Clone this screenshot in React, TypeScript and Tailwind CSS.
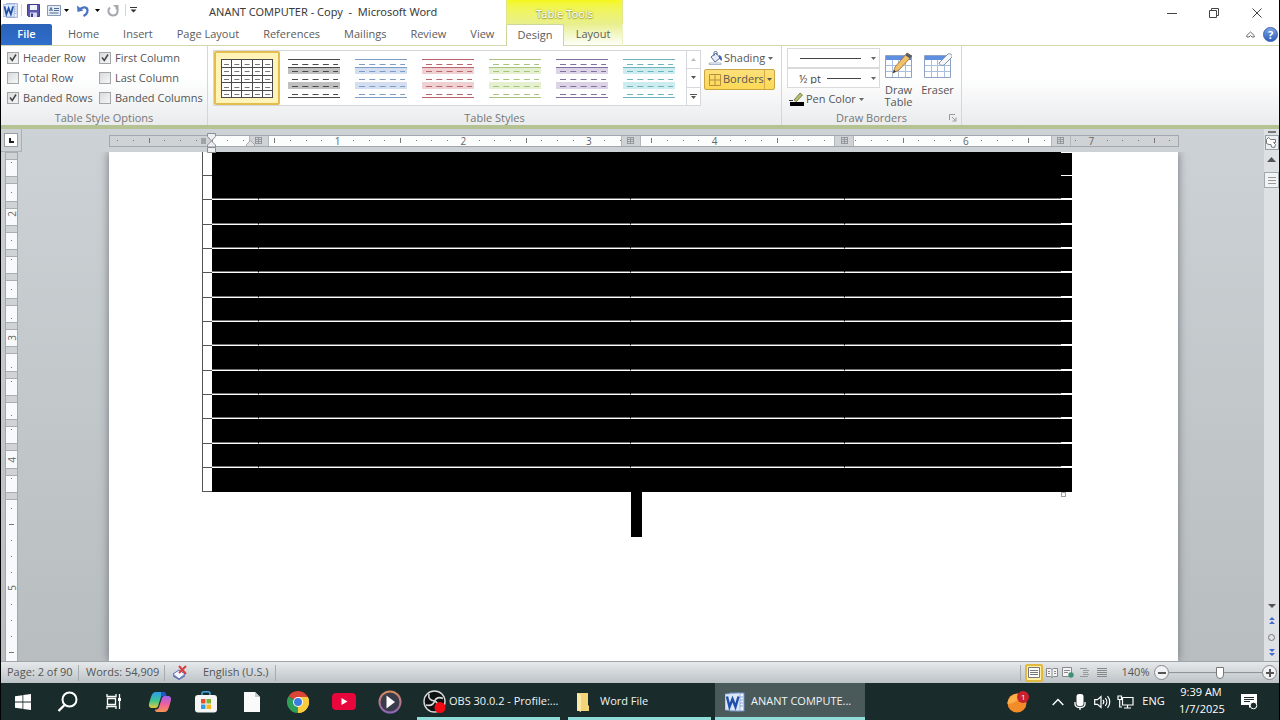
import type { ReactNode } from "react";

const TABS = ["Home", "Insert", "Page Layout", "References", "Mailings", "Review", "View"];

const STYLE_OPTIONS = [
  { label: "Header Row", checked: true },
  { label: "First Column", checked: true },
  { label: "Total Row", checked: false },
  { label: "Last Column", checked: false },
  { label: "Banded Rows", checked: true },
  { label: "Banded Columns", checked: false },
];

const TABLE_STYLES = [
  { name: "Light Shading", line: "#4a4a4a", band: "#c0c0c0" },
  { name: "Light Shading Accent 1", line: "#7d9cc4", band: "#d3dff0" },
  { name: "Light Shading Accent 2", line: "#b9676c", band: "#efd0d3" },
  { name: "Light Shading Accent 3", line: "#a9c47f", band: "#e4f0d0" },
  { name: "Light Shading Accent 4", line: "#80709c", band: "#dcd4e6" },
  { name: "Light Shading Accent 5", line: "#6fb3bb", band: "#cdecef" },
];

// One mark per table row on the vertical ruler
const ROW_MARKS = ["start", "center", "2", "center", "start", "center", "end", "3", "end", "start", "end", "start", "4", "start"];
const TAIL_MARKS = ["dot", "bar", "dot", "dot", "dot", "5", "dot", "dot", "dot", "bar"];

function Caret({ className = "" }: { className?: string }) {
  return (
    <svg className={`shrink-0 ${className}`} width="5" height="3" viewBox="0 0 5 3">
      <path d="M0 0h5L2.5 3z" fill="currentColor" />
    </svg>
  );
}

function WordIcon({ size }: { size: number }) {
  return (
    <svg className="shrink-0" width={size} height={size} viewBox="0 0 20 20">
      <rect x="5" y="1" width="14" height="18" fill="#eef4fc" stroke="#6f8fc4" />
      <path d="M15 5h3M15 8h3M15 11h3M15 14h3" stroke="#8aa6d6" />
      <path d="M0 2l15-1v18L0 18z" fill="#dbe7f8" stroke="#7d9bd0" strokeWidth=".7" />
      <path d="M2 4.500l2.500 10.500L7.500 7l3 8L13.500 4.500" fill="none" stroke="#1f4fa8" strokeWidth="2.400" />
    </svg>
  );
}

function QuickAccess() {
  return (
    <div className="flex w-[206px] shrink-0 items-center">
      <span className="flex w-[18px] items-center pt-px">
        <WordIcon size={15} />
      </span>
      <span className="h-3 w-px bg-gray-300" />
      <button aria-label="Save" className="ml-[5px]">
        <svg width="13" height="13" viewBox="0 0 13 13">
          <path d="M.5.500h12v12h-11l-1-1z" fill="#5b58b5" stroke="#403c92" />
          <path d="M3 1h7v5H3z" fill="#f2f2fb" />
          <path d="M3 8.500h7V13H3z" fill="#d7d8ee" />
          <path d="M4 9.500h2V13H4z" fill="#403c92" />
        </svg>
      </button>
      <button aria-label="Insert text box" className="ml-[7px] flex items-center gap-[3px]">
        <svg width="14" height="13" viewBox="0 0 14 13">
          <path d="M.5 1.500h13v10H.5z" fill="#e4ecf6" stroke="#8799b3" />
          <path d="M2.500 7L4 3.500 5.500 7M3 6h2M7 4.500h5M7 6.500h5M2.500 9h9" fill="none" stroke="#4f6a92" />
        </svg>
        <Caret />
      </button>
      <button aria-label="Undo" className="ml-2 flex items-center gap-[6px]">
        <svg width="12" height="13" viewBox="0 0 12 13">
          <path d="M2.500 5.500C6 2 10.500 3 10.500 6.500c0 3-2 4.500-4 5.500" fill="none" stroke="#4a74c4" strokeWidth="2.200" />
          <path d="M0 1.500l.5 6.500 6-1.500z" fill="#4a74c4" />
        </svg>
        <Caret />
      </button>
      <button aria-label="Redo" className="ml-[7px]">
        <svg width="12" height="13" viewBox="0 0 12 13">
          <path d="M3 3.500C0 6 1.500 11.500 6 11.500s6-5 3-8" fill="none" stroke="#a5a8ad" strokeWidth="2" />
          <path d="M6 1h5.500v5.500z" fill="#a5a8ad" />
        </svg>
      </button>
      <span className="ml-[6px] h-3 w-px bg-gray-300" />
      <button aria-label="Customize Quick Access Toolbar" className="ml-1">
        <svg width="7" height="6" viewBox="0 0 7 6">
          <path d="M0 .5h7" stroke="#333" />
          <path d="M.5 2.500h6l-3 3z" fill="#333" />
        </svg>
      </button>
    </div>
  );
}

function TitleBar() {
  return (
    <header className="flex h-6 shrink-0">
      <div className="flex w-[505px] shrink-0 pb-1 pl-[2px]">
        <QuickAccess />
        <h1 className="self-center pt-1 font-['Noto_Sans',sans-serif] text-[11px] whitespace-pre text-[#3b3b3b]">
          ANANT COMPUTER - Copy  -  Microsoft Word
        </h1>
      </div>
      <div className="flex w-[117px] shrink-0 items-center justify-center border-x border-[#dfe68a] bg-linear-to-b from-[#f6f814] to-[#e8ef8c] pt-1 font-['Noto_Sans',sans-serif] text-[11px] text-white [text-shadow:0_0_2px_#8c9420,0_1px_1px_#a5a940]">
        Table Tools
      </div>
      <div className="flex flex-1 justify-end pr-px text-[#444]">
        <button aria-label="Minimize" className="flex w-[43px] items-center justify-center pt-[2px]">
          <svg width="10" height="10" viewBox="0 0 10 10"><path d="M0 5.500h10" stroke="currentColor" /></svg>
        </button>
        <button aria-label="Restore" className="flex w-[42px] items-center justify-center pt-[2px]">
          <svg width="10" height="10" viewBox="0 0 10 10">
            <path d="M.5 2.500h7v7h-7zM2.500 2.500v-2h7v7h-2" fill="none" stroke="currentColor" />
          </svg>
        </button>
        <button aria-label="Close" className="flex w-[43px] items-center justify-center pt-[2px]">
          <svg width="10" height="10" viewBox="0 0 10 10"><path d="M.5.500l9 9M9.500.500l-9 9" stroke="currentColor" /></svg>
        </button>
      </div>
    </header>
  );
}

function TabRow() {
  return (
    <nav className="flex h-[22px] shrink-0 text-[11px] text-[#5c5c5c]">
      <div className="flex w-[505px] shrink-0 border-b border-[#d3d9ae]">
        <button className="mr-1 w-[51px] shrink-0 rounded-t-xs bg-linear-to-b from-[#2a62b8] to-[#2f6fcd] font-semibold text-white">
          File
        </button>
        {TABS.map((tab) => (
          <button key={tab} className="px-3 whitespace-nowrap">{tab}</button>
        ))}
      </div>
      <div className="flex w-[117px] shrink-0 border-r border-[#eef1c4] bg-linear-to-b from-[#e8ef8c] to-white">
        <button className="w-[58px] rounded-t-xs border border-b-0 border-[#cdd49c] bg-white">Design</button>
        <button className="flex-1 border-b border-[#d3d9ae]">Layout</button>
      </div>
      <div className="flex flex-1 items-center justify-end gap-2 border-b border-[#d3d9ae] pr-px">
        <button aria-label="Minimize the Ribbon">
          <svg width="9" height="7" viewBox="0 0 9 7">
            <path d="M.8 4.500L4.500 1l3.700 3.500v1.500H6L4.500 4.500 3 6H.8z" fill="none" stroke="#666" />
          </svg>
        </button>
        <button aria-label="Help" className="flex size-[15px] items-center justify-center rounded-full border border-[#355fae] bg-linear-to-b from-[#7fa4e0] to-[#2f62bd] text-[11px] leading-none font-bold text-white">
          ?
        </button>
      </div>
    </nav>
  );
}

function Group({ label, className = "", launcher, children }: { label?: string; className?: string; launcher?: boolean; children: ReactNode }) {
  return (
    <section className={`flex flex-col border-r border-[#d6dbc0] ${className}`}>
      <div className="flex-1">{children}</div>
      <div className="flex h-[14px] items-center text-[11px] text-[#777]">
        <span className="flex-1 text-center">{label}</span>
        {launcher && (
          <button aria-label={`${label} dialog`} className="mr-1 -ml-3">
            <svg width="8" height="8" viewBox="0 0 8 8">
              <path d="M.5 6V.500H6M3 3l3.500 3.500M7 3.500V7H3.500" fill="none" stroke="#999" />
            </svg>
          </button>
        )}
      </div>
    </section>
  );
}

function Option({ label, checked }: { label: string; checked: boolean }) {
  return (
    <label className="flex items-center gap-1 whitespace-nowrap">
      <span className="relative flex size-3 shrink-0">
        <input
          type="checkbox"
          defaultChecked={checked}
          className="peer size-3 appearance-none border border-[#a3a6a9] bg-linear-to-br from-[#d9dbdd] to-[#f6f6f6]"
        />
        <svg className="pointer-events-none absolute inset-0 hidden peer-checked:block" width="12" height="12" viewBox="0 0 12 12">
          <path d="M3 5.500l2.300 3L9 2.500" fill="none" stroke="#444" strokeWidth="1.500" />
        </svg>
      </span>
      {label}
    </label>
  );
}

function GridThumb() {
  return (
    <svg width="52" height="39" viewBox="0 0 52 39">
      <path
        d="M0 .5h52M0 8.500h52M0 16.500h52M0 23.500h52M0 31.500h52M0 38.500h52M.5 0v39M10.500 0v39M20.500 0v39M31.500 0v39M41.500 0v39M51.500 0v39"
        stroke="#4a4a4a"
      />
      <path
        d="M3 5.500h47M3 12.500h47M3 20.500h47M3 28.500h47M3 35.500h47"
        stroke="#777"
        strokeDasharray="5 5.300"
      />
    </svg>
  );
}

function BandedThumb({ line, band }: { line: string; band: string }) {
  return (
    <svg width="52" height="39" viewBox="0 0 52 39">
      <path d="M0 8h52v7H0zM0 23h52v7H0z" fill={band} />
      <path d="M0 .5h52M0 8.500h52M0 38.500h52" stroke={line} />
      <path d="M4 5.500h46M4 12.500h46M4 20.500h46M4 27.500h46M4 35.500h46" stroke={line} strokeDasharray="6 4.300" />
    </svg>
  );
}

function TableIcon({ children }: { children: ReactNode }) {
  return (
    <svg width="28" height="28" viewBox="0 0 28 28">
      <path d="M.5 3.500h26v22H.5z" fill="#fff" stroke="#8ea3c4" />
      <path d="M1 4h25v4H1z" fill="#5f8fe0" />
      <path d="M1 13.500h25M1 19.500h25M7.500 8v17M13.500 8v17M20.500 8v17" stroke="#a9bfdf" />
      {children}
    </svg>
  );
}

function LineSelect({ label, value }: { label: string; value?: string }) {
  return (
    <label className="relative flex h-5 w-[93px] items-center text-[#444]">
      <select aria-label={label} className="h-full w-full appearance-none border border-[#d9dadb] bg-white pl-[11px] text-[11px] leading-none">
        <option>{value ?? ""}</option>
      </select>
      <span className={`pointer-events-none absolute right-[19px] h-px bg-[#444] ${value ? "w-[34px]" : "w-[61px]"}`} />
      <Caret className="pointer-events-none absolute right-1 text-[#666]" />
    </label>
  );
}

function Ribbon() {
  return (
    <div className="flex h-[79px] shrink-0 bg-linear-to-b from-white from-40% to-[#e9ebed] text-[11px] text-[#555]">
      <Group label="Table Style Options" className="w-[207px]">
        <div className="grid grid-cols-[92px_1fr] gap-y-1 pt-1 pl-[6px] leading-4">
          {STYLE_OPTIONS.map((o) => <Option key={o.label} {...o} />)}
        </div>
      </Group>

      <Group label="Table Styles" className="w-[574px]">
        <div className="flex pt-1 pl-[5px]">
          <div className="flex h-[56px] border border-[#d5d7da] bg-white">
            <button aria-label="Table Grid" className="flex w-[66px] items-center justify-center rounded-xs border-2 border-[#e3bd50] bg-[#fff3b8]">
              <span className="bg-white"><GridThumb /></span>
            </button>
            {TABLE_STYLES.map((s) => (
              <button key={s.name} aria-label={s.name} className="flex w-[67px] items-center justify-center">
                <BandedThumb line={s.line} band={s.band} />
              </button>
            ))}
            <div className="ml-1 flex w-[14px] flex-col divide-y divide-[#d5d7da] border-l border-[#d5d7da] text-[#555]">
              <button aria-label="Previous styles" className="flex flex-1 items-center justify-center text-[#bbb]">
                <Caret className="rotate-180" />
              </button>
              <button aria-label="Next styles" className="flex flex-1 items-center justify-center"><Caret /></button>
              <button aria-label="More styles" className="flex flex-1 flex-col items-center justify-center gap-px">
                <span className="h-px w-[7px] bg-[#555]" />
                <Caret />
              </button>
            </div>
          </div>
          <div className="ml-[3px] flex flex-col">
            <button className="flex h-4 items-center gap-px pl-1">
              <svg width="15" height="14" viewBox="0 0 15 14">
                <path d="M3 6l5-4 4 5-5 4z" fill="#e8eefa" stroke="#55699a" />
                <path d="M6 5V1.500c0-1.500 3-1.500 3 0V4" fill="none" stroke="#55699a" />
                <path d="M11 4c3 1 3.500 4 2.500 6-1-1-2-2-2.500-3z" fill="#3f67b5" />
                <path d="M1 12h12v1.500H1z" fill="#fff" stroke="#9aa7c0" strokeWidth=".8" />
              </svg>
              Shading
              <Caret className="ml-[2px] text-[#666]" />
            </button>
            <div className="mt-[3px] flex h-[21px] rounded-xs border border-[#c9a544] bg-linear-to-b from-[#fbe07a] to-[#fdd954]">
              <button className="flex items-center gap-[2px] pl-1">
                <svg width="12" height="12" viewBox="0 0 12 12">
                  <path d="M.5.500h11v11H.5zM6 0v12M0 6h12" fill="none" stroke="#b8903a" />
                </svg>
                Borders
              </button>
              <button aria-label="Borders menu" className="flex w-[10px] items-center justify-center border-l border-[#d1ab45]">
                <Caret />
              </button>
            </div>
          </div>
        </div>
      </Group>

      <Group label="Draw Borders" launcher className="w-[180px]">
        <div className="flex pt-[2px] pl-[5px]">
          <div className="flex flex-col">
            <LineSelect label="Line Style" />
            <LineSelect label="Line Weight" value="½ pt" />
            <button className="flex h-[22px] items-center gap-[2px] pl-[2px]">
              <svg width="15" height="14" viewBox="0 0 15 14">
                <path d="M5 8l6-7 2.500 2L7.500 9.500z" fill="#b8bf6a" stroke="#66703a" strokeWidth=".8" />
                <path d="M0 8.500h4" stroke="#333" />
                <path d="M1 10h14v4H1z" fill="#000" />
              </svg>
              Pen Color
              <Caret className="ml-px text-[#666]" />
            </button>
          </div>
          <button className="ml-[3px] flex w-[31px] flex-col items-center gap-1 pt-1 leading-3">
            <TableIcon>
              <path d="M8 21l2-6L22 1l5 3-13 14z" fill="#f1c069" stroke="#8a6a30" strokeWidth=".8" />
              <path d="M22 1l5 3-2 2.500-4.500-3z" fill="#555e70" />
              <path d="M8 21l1-3 2 1.500z" fill="#333" />
            </TableIcon>
            Draw Table
          </button>
          <button className="ml-2 flex w-[31px] flex-col items-center gap-1 pt-1 leading-3">
            <TableIcon>
              <path d="M15 11L24 2c2-1 5 1 4 3l-8 8c-2 1-5 0-5-2z" fill="#f4f6fa" stroke="#8290a8" />
            </TableIcon>
            Eraser
          </button>
        </div>
      </Group>
    </div>
  );
}

function ColumnMarker({ className }: { className: string }) {
  return (
    <span className={`absolute inset-y-0 flex w-5 items-center justify-center border-x border-[#b3b8bc] bg-[#cfd3d6] ${className}`}>
      <svg width="7" height="7" viewBox="0 0 7 7">
        <path d="M0 .5h7M0 2.500h7M0 4.500h7M0 6.500h7M.5 0v7M3.500 0v7M6.500 0v7" stroke="#8a8f94" strokeWidth=".8" />
      </svg>
    </span>
  );
}

function HorizontalRuler() {
  return (
    <div className="relative mr-[85px] ml-[87px] flex h-3 flex-1 border border-[#a3a8ae] bg-linear-to-r from-[#cfd3d6] from-[9.5%] via-[#fbfcfc] via-[9.5%] to-[#fbfcfc] text-[10px] text-[#666]">
      {Array.from({ length: 68 }, (_, i) => {
        const eighth = i - 6;
        const isInch = eighth > 0 && eighth % 8 === 0;
        return (
          <span key={i} className={`flex w-0 flex-1 items-center justify-center leading-none ${i > 59 ? "bg-[#cfd3d6]" : ""}`}>
            {isInch ? eighth / 8 : <i className={`w-px bg-[#777] ${eighth % 4 === 0 ? "h-[5px]" : "h-px"}`} />}
          </span>
        );
      })}
      <span className="absolute inset-y-[2px] left-[8.5%] w-[5px] bg-[#9fa3a8]" />
      <ColumnMarker className="left-[13%]" />
      <ColumnMarker className="left-[47.8%]" />
      <ColumnMarker className="left-[67.8%]" />
      <ColumnMarker className="left-[88.1%]" />
      <svg className="absolute -top-[3px] left-[9.1%]" width="9" height="20" viewBox="0 0 9 20">
        <path d="M.5.500h8v3L4.500 8 .5 3.500zM4.500 8l4 4v2h-8v-2zM.5 14.500h8v5h-8z" fill="#eceef0" stroke="#8a8f94" />
      </svg>
      <svg className="absolute top-1 left-[12.7%]" width="9" height="7" viewBox="0 0 9 7">
        <path d="M4.500.500l4 4v2h-8v-2z" fill="#dfe1e3" stroke="#a5a9ad" />
      </svg>
    </div>
  );
}

function VerticalRuler() {
  return (
    <div className="flex w-[13px] flex-col overflow-hidden border-x border-[#a3a8ae] bg-[#f7f9fa] text-[10px] text-[#666]">
      <div className="flex h-[340px] shrink-0 flex-col">
        {ROW_MARKS.map((mark, i) => (
          <div key={i} className="flex min-h-0 flex-1 flex-col items-center">
            <span className="h-2 w-full shrink-0 border-y border-[#a9aeb3] bg-[#cfd3d6]" />
            <span className={`flex min-h-0 flex-1 ${mark === "start" ? "items-start pt-[2px]" : mark === "end" ? "items-end pb-[3px]" : mark === "2" ? "items-start" : "items-center"}`}>
              {/\d/.test(mark) ? <b className="-rotate-90 leading-none font-normal">{mark}</b> : <i className="size-px bg-[#777]" />}
            </span>
          </div>
        ))}
      </div>
      <span className="h-2 shrink-0 border-y border-[#a9aeb3] bg-[#cfd3d6]" />
      {TAIL_MARKS.map((mark, i) => (
        <span key={i} className="flex h-4 shrink-0 items-center justify-center">
          {mark === "5" ? (
            <b className="-rotate-90 leading-none font-normal">5</b>
          ) : (
            <i className={`h-px bg-[#777] ${mark === "bar" ? "w-[5px]" : "w-px"}`} />
          )}
        </span>
      ))}
    </div>
  );
}

function SelectedTable() {
  return (
    <table className="w-full table-fixed border-separate border-spacing-0 border-l border-[#555] bg-white">
      <colgroup>
        <col className="w-[9px]" />
        <col className="w-[5.4%]" />
        <col className="w-[42.8%]" />
        <col className="w-[24.7%]" />
        <col />
        <col className="w-[11px]" />
      </colgroup>
      <tbody>
        {Array.from({ length: 14 }, (_, row) => {
          const line = row === 0 || row === 13 ? "border-b-black" : "border-b-white shadow-[inset_0_-1px_#707070]";
          return (
            <tr key={row} className={row % 3 === 2 && row < 12 ? "h-[25px]" : "h-6"}>
              <td className="border-b border-[#555] p-0" />
              <td className={`border-r border-b border-r-black bg-black p-0 ${line}`} />
              <td className={`border-r border-b border-r-black bg-black p-0 ${line}`} />
              <td className={`border-r border-b border-r-black bg-black p-0 ${line}`} />
              <td className={`border-b bg-black p-0 ${line}`} />
              <td className={`bg-black p-0 ${row === 13 ? "" : row === 0 ? "border-y border-white" : "border-b-2 border-white"}`} />
            </tr>
          );
        })}
      </tbody>
    </table>
  );
}

function ScrollBar() {
  return (
    <div className="flex w-[15px] shrink-0 flex-col items-center bg-[#dde1e4] text-[#555]">
      <span className="mt-[2px] h-[2px] w-2 bg-[#777]" />
      <button aria-label="View Ruler" className="mt-[2px] flex h-[15px] w-[14px] items-center justify-center border border-[#999fa5] bg-[#eceff1]">
        <svg width="11" height="11" viewBox="0 0 11 11">
          <path d="M.5 2.500l2-2 2 2h5v3h-2l2 2-1 3-3-.5-.5-2.500H3l-2.500-1z" fill="#fff" stroke="#777" />
        </svg>
      </button>
      <button aria-label="Scroll up" className="flex h-[22px] items-center pb-1">
        <svg width="9" height="5" viewBox="0 0 9 5"><path d="M0 5l4.500-5L9 5z" fill="currentColor" /></svg>
      </button>
      <div className="w-full flex-1">
        <div className="flex h-4 flex-col items-center justify-center gap-[2px] border border-[#a3a8ae] bg-[#f1f3f4]">
          <span className="h-px w-2 bg-[#999]" />
          <span className="h-px w-2 bg-[#999]" />
          <span className="h-px w-2 bg-[#999]" />
        </div>
      </div>
      <button aria-label="Scroll down" className="flex h-[15px] items-center">
        <svg width="8" height="4" viewBox="0 0 8 4"><path d="M0 0h8L4 4z" fill="currentColor" /></svg>
      </button>
      <button aria-label="Previous Page" className="flex h-4 items-center">
        <svg width="6" height="8" viewBox="0 0 6 8"><path d="M0 3l3-3 3 3zM0 7l3-3 3 3z" fill="#4468d0" /></svg>
      </button>
      <button aria-label="Select Browse Object" className="flex h-4 items-center">
        <span className="size-[7px] rounded-full border border-[#777]" />
      </button>
      <button aria-label="Next Page" className="flex h-4 items-center">
        <svg width="6" height="8" viewBox="0 0 6 8"><path d="M0 0h6L3 3zM0 4h6L3 7z" fill="#4468d0" /></svg>
      </button>
    </div>
  );
}

function Workspace() {
  return (
    <main className="flex min-h-0 flex-1 border-t-4 border-[#b4c294] bg-linear-to-b from-[#cdd2d6] to-[#b8bdc0]">
      <div className="flex min-w-0 flex-1 flex-col">
        <div className="flex h-[23px] shrink-0 items-center">
          <div className="flex h-full w-[21px] shrink-0 items-center justify-center border-r border-b border-[#abb0b5]">
            <button aria-label="Tab selector" className="flex size-[14px] items-center justify-center border border-[#9a9fa5] bg-white">
              <svg width="5" height="5" viewBox="0 0 5 5"><path d="M1 0v4h4" fill="none" stroke="#222" strokeWidth="2" /></svg>
            </button>
          </div>
          <HorizontalRuler />
        </div>
        <div className="flex min-h-0 flex-1">
          <div className="flex w-[21px] shrink-0 pl-1">
            <VerticalRuler />
          </div>
          <div className="flex min-w-0 flex-1 overflow-hidden pr-[86px] pl-[87px]">
            <article className="min-w-0 flex-1 bg-white pr-[106px] pl-[93px] shadow-[0_0_9px_#6f757a]">
              <SelectedTable />
              <div className="flex justify-between">
                <span className="w-[10px]" />
                <span className="h-[45px] w-[11px] bg-black" />
                <span className="mr-[6px] size-[5px] border border-gray-400" />
              </div>
            </article>
          </div>
        </div>
      </div>
      <ScrollBar />
    </main>
  );
}

function StatusBar() {
  return (
    <footer className="flex h-[22px] shrink-0 items-center border-t border-[#9fa4a8] bg-linear-to-b from-[#e6e9eb] to-[#bcc3c7] text-[11px] text-[#555]">
      <button className="w-[77px] pl-[6px] text-left whitespace-nowrap">Page: 2 of 90</button>
      <span className="h-4 w-px bg-[#a6abaf]" />
      <button className="w-[85px] pl-[7px] text-left whitespace-nowrap">Words: 54,909</button>
      <span className="h-4 w-px bg-[#a6abaf]" />
      <button aria-label="Proofing errors" className="ml-[7px]">
        <svg width="16" height="15" viewBox="0 0 16 15">
          <path d="M1 9l6-4 6 4-6 5z" fill="#f4f6ff" stroke="#5b6bb8" />
          <path d="M1 10l6 4 6-4v1.500L7 15l-6-3.500z" fill="#5b6bb8" />
          <path d="M7 1l7 8M14 1L7 8" stroke="#d84040" strokeWidth="2" />
        </svg>
      </button>
      <button className="ml-[15px] whitespace-nowrap">English (U.S.)</button>
      <span className="ml-[6px] h-4 w-px bg-[#a6abaf]" />
      <div className="flex flex-1 items-center justify-end pr-[2px]">
        <span className="mr-1 h-4 w-px bg-[#a6abaf]" />
        <button aria-label="Print Layout" className="flex size-[18px] items-center justify-center rounded-xs border-2 border-[#e2b93f] bg-[#fff0a8]">
          <svg width="12" height="11" viewBox="0 0 12 11">
            <path d="M.5.500h11v10H.5z" fill="#fff" stroke="#777" />
            <path d="M2 3.500h8M2 5.500h8M2 7.500h8" stroke="#777" />
          </svg>
        </button>
        <button aria-label="Full Screen Reading" className="ml-[3px]">
          <svg width="12" height="11" viewBox="0 0 12 11">
            <path d="M.5 1.500h4L6 2.500l1.500-1h4v8h-4L6 10.500 4.500 9.500h-4zM6 2.500v8" fill="#f3f4f5" stroke="#888" />
            <path d="M2 4.500h2M2 6.500h2M8 4.500h2M8 6.500h2" stroke="#888" />
          </svg>
        </button>
        <button aria-label="Web Layout" className="ml-1">
          <svg width="12" height="11" viewBox="0 0 12 11">
            <path d="M.5.500h9v9h-9z" fill="#f3f4f5" stroke="#888" />
            <path d="M2 3.500h6M2 5.500h4" stroke="#888" />
            <circle cx="9" cy="8" r="2.700" fill="#3f8f72" />
          </svg>
        </button>
        <button aria-label="Outline" className="ml-[6px]">
          <svg width="9" height="9" viewBox="0 0 9 9"><path d="M0 .5h7M3 2.500h6M3 4.500h5M3 6.500h6M0 8.500h8" stroke="#999" /></svg>
        </button>
        <button aria-label="Draft" className="ml-2">
          <svg width="10" height="9" viewBox="0 0 10 9"><path d="M0 .5h10M0 2.500h10M0 4.500h10M0 6.500h10M0 8.500h10" stroke="#888" /></svg>
        </button>
        <button className="ml-[10px] w-[37px]">140%</button>
        <button aria-label="Zoom Out" className="flex size-[15px] items-center justify-center rounded-full border border-[#888] bg-[#f0f2f3]">
          <span className="h-[2px] w-2 bg-[#555]" />
        </button>
        <input
          type="range"
          aria-label="Zoom"
          defaultValue={55}
          className="h-3 w-[93px] appearance-none bg-linear-to-b from-transparent from-45% via-[#8a8f94] via-45% to-transparent to-55% [&::-webkit-slider-thumb]:h-3 [&::-webkit-slider-thumb]:w-2 [&::-webkit-slider-thumb]:appearance-none [&::-webkit-slider-thumb]:rounded-b-sm [&::-webkit-slider-thumb]:border [&::-webkit-slider-thumb]:border-[#777] [&::-webkit-slider-thumb]:bg-white"
        />
        <button aria-label="Zoom In" className="flex size-[15px] items-center justify-center rounded-full border border-[#888] bg-[#f0f2f3]">
          <svg width="8" height="8" viewBox="0 0 8 8"><path d="M4 0v8M0 4h8" stroke="#555" strokeWidth="2" /></svg>
        </button>
      </div>
    </footer>
  );
}

function TaskIcon({ label, children }: { label: string; children: ReactNode }) {
  return (
    <button aria-label={label} className="flex h-full w-[46px] shrink-0 items-center justify-center first:w-[44px]">
      {children}
    </button>
  );
}

function TaskWindow({ title, className, children }: { title: string; className: string; children: ReactNode }) {
  return (
    <button className={`flex h-full shrink-0 items-center border-b-[3px] border-[#8fdcd8] pt-[3px] text-[11px] whitespace-nowrap text-[#f0f3f3] ${className}`}>
      {children}
      {title}
    </button>
  );
}

function Taskbar() {
  return (
    <div className="flex h-[37px] shrink-0 items-center bg-[#1a2b2b] text-white">
      <TaskIcon label="Start">
        <svg width="16" height="16" viewBox="0 0 16 16">
          <path d="M0 2.300L7.500 1.200v6.400H0zM8.300 1.100L16 0v7.600H8.300zM0 8.400h7.500v6.400L0 13.700zM8.300 8.400H16V16l-7.700-1.100z" fill="#fff" />
        </svg>
      </TaskIcon>
      <TaskIcon label="Search">
        <svg width="22" height="21" viewBox="0 0 22 21">
          <circle cx="12.500" cy="8.500" r="7" fill="none" stroke="#fff" strokeWidth="2" />
          <path d="M7.500 14L1.500 20" stroke="#fff" strokeWidth="2.400" />
        </svg>
      </TaskIcon>
      <TaskIcon label="Task View">
        <svg width="16" height="15" viewBox="0 0 16 15">
          <path d="M1 0v2.500h9V0M1 15v-2.500h9V15M1.500 4.500h8v6h-8zM13.500 0v15" fill="none" stroke="#fff" strokeWidth="1.300" />
          <path d="M12 4h3v3h-3z" fill="#fff" />
        </svg>
      </TaskIcon>
      <TaskIcon label="Copilot">
        <svg width="24" height="22" viewBox="0 0 24 22">
          <defs>
            <linearGradient id="cpLeft" x1="0" y1="0" x2="0" y2="1">
              <stop offset="0" stopColor="#2a9df0" />
              <stop offset=".55" stopColor="#3fc58e" />
              <stop offset="1" stopColor="#e6c93a" />
            </linearGradient>
            <linearGradient id="cpRight" x1="0" y1="0" x2="0" y2="1">
              <stop offset="0" stopColor="#9a62ee" />
              <stop offset=".5" stopColor="#ee5f9e" />
              <stop offset="1" stopColor="#f79650" />
            </linearGradient>
          </defs>
          <path d="M15 1H8C5 1 4 3 3 6L1.200 12c-1 3.500 .5 5 3 5h3c2.500 0 3-2 3.500-4L13 6c.6-2 1.500-2.500 4-2.500C17 2 16.500 1 15 1z" fill="url(#cpLeft)" />
          <path d="M13 1h2.500c2 0 2.500 1.500 3 4H13z" fill="#2357c8" />
          <path d="M9 21h7c3 0 4-2 5-5l1.800-6c1-3.500-.5-5-3-5h-3c-2.500 0-3 2-3.500 4L11 16c-.6 2-1.500 2.500-4 2.500C7 20 7.500 21 9 21z" fill="url(#cpRight)" />
        </svg>
      </TaskIcon>
      <TaskIcon label="Microsoft Store">
        <svg width="22" height="22" viewBox="0 0 22 22">
          <path d="M7 5V2.500C7 1 8 .8 9 .8h4c1 0 2 .2 2 1.700V5" fill="none" stroke="#3fa4e0" strokeWidth="1.600" />
          <rect x="0" y="4" width="22" height="17.500" rx="3" fill="#f5f5f5" />
          <path d="M6 8h4.500v4.500H6z" fill="#ea4f2d" />
          <path d="M11.500 8H16v4.500h-4.500z" fill="#7db72f" />
          <path d="M6 13.500h4.500V18H6z" fill="#2f9fe8" />
          <path d="M11.500 13.500H16V18h-4.500z" fill="#f8b81c" />
        </svg>
      </TaskIcon>
      <TaskIcon label="Document">
        <svg width="16" height="20" viewBox="0 0 16 20">
          <path d="M0 0h11l5 5v15H0z" fill="#fafafa" />
          <path d="M11 0v5h5z" fill="#c6cbcb" />
        </svg>
      </TaskIcon>
      <TaskIcon label="Google Chrome">
        <svg width="22" height="22" viewBox="0 0 22 22">
          <path d="M11 11L1.470 5.500A11 11 0 0 1 20.530 5.500z" fill="#dc4437" />
          <path d="M11 11L20.530 5.500A11 11 0 0 1 11 22z" fill="#f9cb3d" />
          <path d="M11 11V22A11 11 0 0 1 1.470 5.500z" fill="#2f9e58" />
          <path d="M11 6h9.800A11 11 0 0 1 11 22l4.330-8.500z" fill="#f9cb3d" />
          <circle cx="11" cy="11" r="5" fill="#fff" />
          <circle cx="11" cy="11" r="4" fill="#3b7de0" />
        </svg>
      </TaskIcon>
      <TaskIcon label="YouTube">
        <svg width="24" height="17" viewBox="0 0 24 17">
          <rect width="24" height="17" rx="4" fill="#e8063c" />
          <path d="M9.500 5l6 3.500-6 3.500z" fill="#fff" />
        </svg>
      </TaskIcon>
      <TaskIcon label="Media Player">
        <svg width="24" height="24" viewBox="0 0 24 24">
          <defs>
            <linearGradient id="mp" x1="0" y1="0" x2="0" y2="1">
              <stop offset="0" stopColor="#d68a5e" />
              <stop offset="1" stopColor="#8f67b8" />
            </linearGradient>
          </defs>
          <circle cx="12" cy="12" r="10.500" fill="#3a3c49" stroke="url(#mp)" strokeWidth="2" />
          <path d="M8.500 5.500L17 12l-8.500 6.500z" fill="#fff" />
        </svg>
      </TaskIcon>

      <TaskWindow title="OBS 30.0.2 - Profile:..." className="ml-1 w-[143px] gap-[3px] pl-[6px]">
        <svg className="shrink-0" width="23" height="23" viewBox="0 0 23 23">
          <circle cx="11.500" cy="11.500" r="10.500" fill="#0d1011" stroke="#d8dada" strokeWidth="1.400" />
          <path d="M6 4c-1 4 1 6.500 5.500 7C13 8 16 6.500 20 8.500M11.500 11c-1 4-4 5-8.500 4M11.500 11c3 1 4 4 3 8" fill="none" stroke="#d8dada" strokeWidth="1.600" />
          <circle cx="17" cy="17.500" r="5.500" fill="#f00a14" />
        </svg>
      </TaskWindow>
      <TaskWindow title="Word File" className="ml-2 w-[143px] gap-[10px] pl-2">
        <svg className="shrink-0" width="14" height="20" viewBox="0 0 14 20">
          <path d="M1 1h11v12l1 1v5H1z" fill="#f3d478" />
          <path d="M1 1l4 2v17l-4-2z" fill="#fbe9a8" />
        </svg>
      </TaskWindow>
      <TaskWindow title="ANANT COMPUTE..." className="ml-1 w-[150px] gap-[6px] bg-[#4a5959] pl-[10px]">
        <WordIcon size={20} />
      </TaskWindow>

      <div className="flex h-full flex-1 items-center justify-end">
        <button aria-label="News and interests" className="mr-[23px]">
          <svg width="22" height="22" viewBox="0 0 22 22">
            <circle cx="10" cy="12" r="9.500" fill="#f28c28" />
            <path d="M2 8a9.500 9.500 0 0 1 12-4.500C12 9 8 12 .6 13 .3 11 1 9.500 2 8z" fill="#f9b04a" />
            <circle cx="16" cy="6" r="6" fill="#c8202c" />
            <text x="14" y="9" fill="#fff" fontSize="8">1</text>
          </svg>
        </button>
        <button aria-label="Show hidden icons" className="mr-[10px]">
          <svg width="12" height="8" viewBox="0 0 12 8"><path d="M.7 7L6 1.500 11.300 7" fill="none" stroke="#fff" strokeWidth="1.400" /></svg>
        </button>
        <button aria-label="Microphone" className="mr-2">
          <svg width="12" height="16" viewBox="0 0 12 16">
            <rect x="2.500" y="0" width="7" height="12" rx="2.500" fill="#fff" />
            <path d="M1 8v2c0 2.500 2 3.500 5 3.500s5-1 5-3.500V8M6 13v3" fill="none" stroke="#fff" strokeWidth="1.300" />
          </svg>
        </button>
        <button aria-label="Volume" className="mr-[6px]">
          <svg width="17" height="14" viewBox="0 0 17 14">
            <path d="M.7 4.700h2.800L7 1.500v11L3.500 9.300H.7zM9 5c1 1.200 1 2.800 0 4M11.300 3.200c2 2.200 2 5.400 0 7.600M13.500 1.200c3 3.300 3 8.300 0 11.600" fill="none" stroke="#fff" strokeWidth="1.200" />
          </svg>
        </button>
        <button aria-label="Network" className="mr-2">
          <svg width="17" height="14" viewBox="0 0 17 14">
            <path d="M5.500 2.500h10.500v7.500H5.500V2.500M10.500 10v3M7 13h7M1 1h3.500v3.500H1zM2.700 4.500V12H5" fill="none" stroke="#fff" strokeWidth="1.200" />
          </svg>
        </button>
        <button className="w-[23px] text-[11px]">ENG</button>
        <button className="ml-[14px] w-[44px] pb-[3px] text-center text-[11px] leading-[17px] whitespace-nowrap">
          <span className="block">9:39 AM</span>
          <span className="block">1/7/2025</span>
        </button>
        <button aria-label="Notifications" className="mr-[21px] ml-[18px]">
          <svg width="17" height="17" viewBox="0 0 17 17">
            <path d="M0 1h16v11h-5l-3 3v-3H0z" fill="#fff" />
            <path d="M3 4.500h10M3 6.500h10M3 8.500h6" stroke="#1a2b2b" />
            <circle cx="12.500" cy="12.500" r="3.300" fill="#1a2b2b" stroke="#fff" />
          </svg>
        </button>
      </div>
    </div>
  );
}

export default function App() {
  return (
    <div className="flex h-screen flex-col overflow-hidden border-x border-black bg-white font-['Open_Sans','Noto_Sans',sans-serif]">
      <TitleBar />
      <TabRow />
      <Ribbon />
      <Workspace />
      <StatusBar />
      <Taskbar />
    </div>
  );
}
